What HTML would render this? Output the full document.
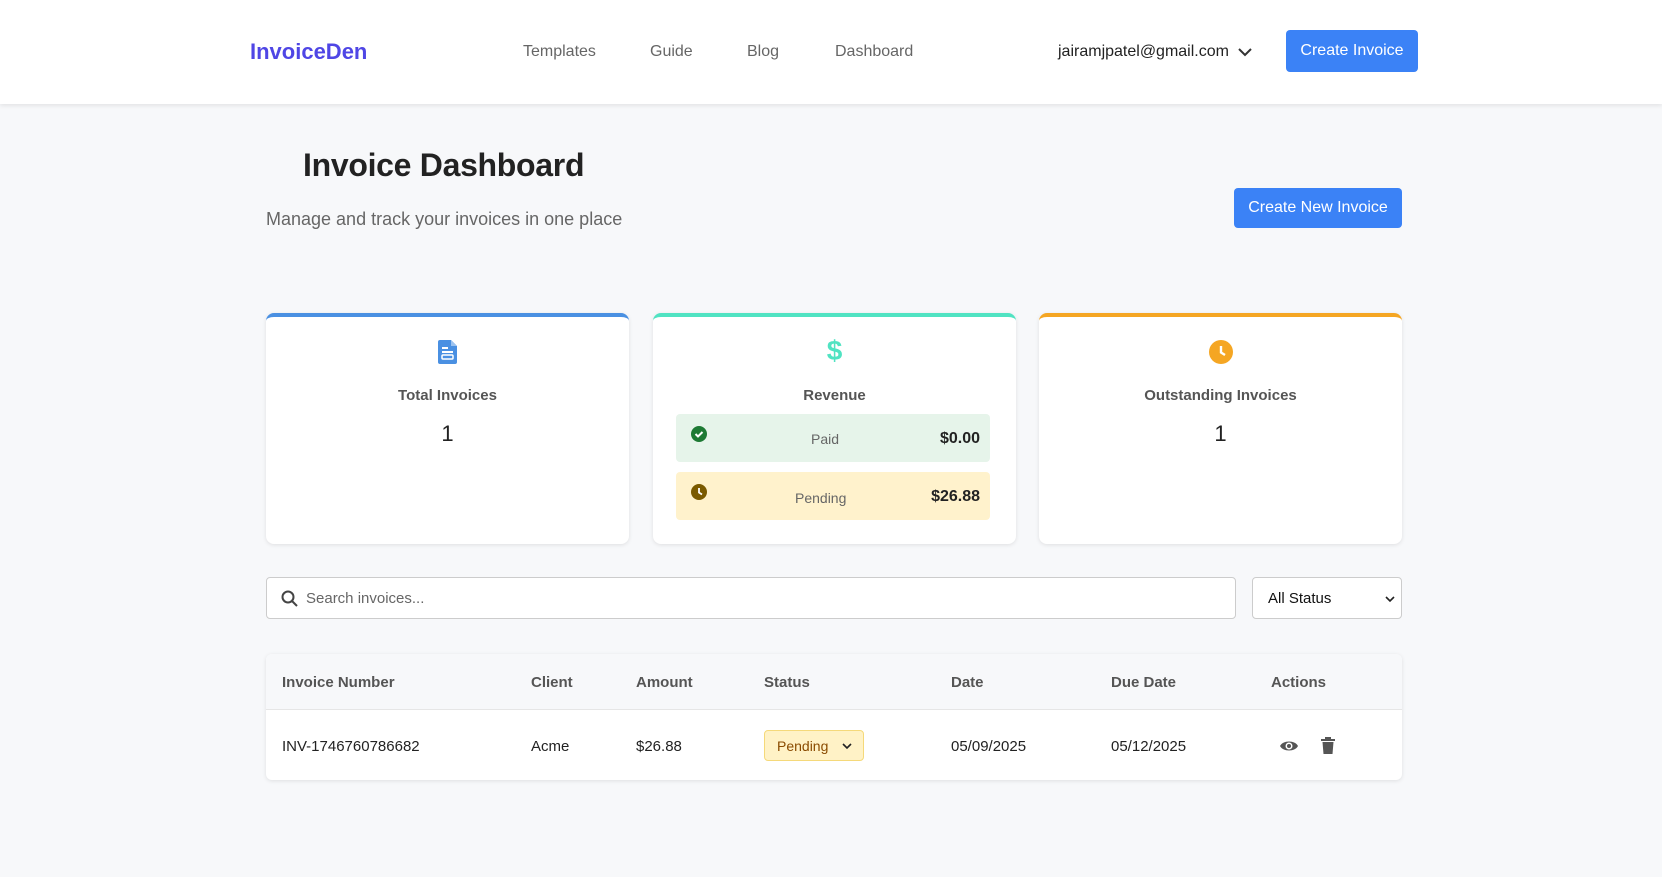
<!DOCTYPE html>
<html><head><meta charset="utf-8"><style>
*{box-sizing:border-box;margin:0;padding:0}
body{width:1662px;height:877px;background:#f7f8fa;font-family:"Liberation Sans",sans-serif;position:relative;overflow:hidden;color:#222}
.a{position:absolute}
header{position:absolute;left:0;top:0;width:1662px;height:104px;background:#fff;box-shadow:0 2px 4px rgba(0,0,0,.08)}
.nav{position:absolute;top:43px;font-size:16px;color:#666}
.btn{position:absolute;background:#3b82f6;color:#fff;border-radius:4px;font-size:16px;display:flex;align-items:center;justify-content:center}
.card{position:absolute;top:313px;width:363px;height:231px;background:#fff;border-radius:8px;box-shadow:0 1px 4px rgba(0,0,0,.1);border-top:4px solid}
.ct{position:absolute;left:0;width:100%;text-align:center;top:70px;font-size:15px;font-weight:bold;color:#555}
.cn{position:absolute;left:0;width:100%;text-align:center;top:104px;font-size:22px;color:#222}
.ic{position:absolute;left:50%;transform:translateX(-50%);top:23px}
.rb{position:absolute;left:23px;width:314px;height:48px;border-radius:4px;font-size:14px;color:#666}
.th{position:absolute;top:674px;font-size:15px;font-weight:bold;color:#555}
.td{position:absolute;top:738px;font-size:15px;color:#222}
</style></head><body>
<header>
<div class="a" style="left:250px;top:39px;font-size:22px;font-weight:bold;color:#4f46e5">InvoiceDen</div>
<div class="nav" style="left:523px">Templates</div>
<div class="nav" style="left:650px">Guide</div>
<div class="nav" style="left:747px">Blog</div>
<div class="nav" style="left:835px">Dashboard</div>
<div class="nav" style="left:1058px;color:#222">jairamjpatel@gmail.com</div>
<svg class="a" style="left:1237px;top:44px" width="16" height="16" viewBox="0 0 16 16"><path d="M2 5l6 6 6-6" stroke="#333" stroke-width="2" fill="none"/></svg>
<div class="btn" style="left:1286px;top:30px;width:132px;height:42px">Create Invoice</div>
</header>
<div class="a" style="left:303px;top:147px;font-size:32px;font-weight:bold;color:#222;letter-spacing:-0.3px">Invoice Dashboard</div>
<div class="a" style="left:266px;top:209px;font-size:18px;color:#666">Manage and track your invoices in one place</div>
<div class="btn" style="left:1234px;top:188px;width:168px;height:40px">Create New Invoice</div>

<div class="card" style="left:266px;border-color:#4a90e2">
<svg class="ic" width="20" height="24" viewBox="0 0 20 24"><path d="M2 0h11l6 6v16a2 2 0 01-2 2H2a2 2 0 01-2-2V2a2 2 0 012-2z" fill="#4a90e2"/><path d="M13 0v6h6" fill="#9cc3f0"/><rect x="4" y="11" width="11" height="2" fill="#fff"/><rect x="4" y="15" width="11" height="4" rx="1" fill="none" stroke="#fff" stroke-width="1.5"/><rect x="4" y="7" width="6" height="2" fill="#fff"/></svg>
<div class="ct">Total Invoices</div><div class="cn">1</div></div>

<div class="card" style="left:653px;border-color:#50e3c2">
<div class="ic" style="top:18px;font-size:28px;font-weight:bold;color:#50e3c2">$</div>
<div class="ct">Revenue</div>
<div class="rb" style="top:97px;background:#e6f4ea"><svg class="a" style="left:15px;top:12px" width="16" height="16"><circle cx="8" cy="8" r="8" fill="#1e7a34"/><path d="M4.5 8l2.5 2.5 4.5-4.5" stroke="#fff" stroke-width="2" fill="none"/></svg><span class="a" style="left:135px;top:17px">Paid</span><span class="a" style="right:10px;top:16px;font-size:16px;font-weight:bold;color:#222">$0.00</span></div>
<div class="rb" style="top:155px;background:#fff2cc"><svg class="a" style="left:15px;top:12px" width="16" height="16"><circle cx="8" cy="8" r="8" fill="#7a5a00"/><path d="M8 4v4.5l3 2" stroke="#fff" stroke-width="1.8" fill="none"/></svg><span class="a" style="left:119px;top:18px">Pending</span><span class="a" style="right:10px;top:16px;font-size:16px;font-weight:bold;color:#222">$26.88</span></div>
</div>

<div class="card" style="left:1039px;border-color:#f5a623">
<svg class="ic" width="24" height="24"><circle cx="12" cy="12" r="12" fill="#f5a623"/><path d="M12 6v6.5l4 2.5" stroke="#fff" stroke-width="2.4" fill="none"/></svg>
<div class="ct">Outstanding Invoices</div><div class="cn">1</div></div>

<div class="a" style="left:266px;top:577px;width:970px;height:42px;background:#fff;border:1px solid #ccc;border-radius:4px"></div>
<svg class="a" style="left:281px;top:590px" width="18" height="18"><circle cx="7" cy="7" r="5.5" stroke="#444" stroke-width="2" fill="none"/><path d="M11 11l5 5" stroke="#444" stroke-width="2"/></svg>
<div class="a" style="left:306px;top:590px;font-size:15px;color:#666">Search invoices...</div>
<div class="a" style="left:1252px;top:577px;width:150px;height:42px;background:#fff;border:1px solid #ccc;border-radius:4px"></div>
<div class="a" style="left:1268px;top:590px;font-size:15px;color:#111">All Status</div>
<svg class="a" style="left:1385px;top:594px" width="10" height="10"><path d="M1 3l4 4 4-4" stroke="#222" stroke-width="1.6" fill="none"/></svg>

<div class="a" style="left:266px;top:654px;width:1136px;height:126px;background:#fff;border-radius:6px;box-shadow:0 1px 4px rgba(0,0,0,.1);overflow:hidden"><div style="height:56px;background:#f7f8fa;border-bottom:1px solid #e6e6e6"></div></div>
<div class="th" style="left:282px">Invoice Number</div>
<div class="th" style="left:531px">Client</div>
<div class="th" style="left:636px">Amount</div>
<div class="th" style="left:764px">Status</div>
<div class="th" style="left:951px">Date</div>
<div class="th" style="left:1111px">Due Date</div>
<div class="th" style="left:1271px">Actions</div>
<div class="td" style="left:282px">INV-1746760786682</div>
<div class="td" style="left:531px">Acme</div>
<div class="td" style="left:636px">$26.88</div>
<div class="a" style="left:764px;top:730px;width:100px;height:31px;background:#fff2c6;border:1px solid #f5d97a;border-radius:4px"></div>
<div class="a" style="left:777px;top:738px;font-size:14px;color:#8a4b00">Pending</div>
<svg class="a" style="left:842px;top:741px" width="10" height="10"><path d="M1 3l4 4 4-4" stroke="#222" stroke-width="1.6" fill="none"/></svg>
<div class="td" style="left:951px">05/09/2025</div>
<div class="td" style="left:1111px">05/12/2025</div>
<svg class="a" style="left:1279px;top:738px" width="20" height="16" viewBox="0 0 20 16"><path d="M1 8C4 2 16 2 19 8 16 14 4 14 1 8z" fill="#555"/><circle cx="10" cy="8" r="3.5" fill="#fff"/><circle cx="10" cy="8" r="2" fill="#555"/></svg>
<svg class="a" style="left:1321px;top:737px" width="14" height="17" viewBox="0 0 14 17"><rect x="0" y="2" width="14" height="2" fill="#555"/><rect x="4" y="0" width="6" height="2" fill="#555"/><path d="M1.5 5h11l-1 12h-9z" fill="#555"/></svg>
</body></html>
